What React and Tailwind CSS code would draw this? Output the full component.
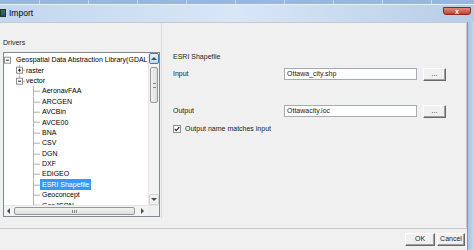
import React from "react";

const drivers = [
    "AeronavFAA",
    "ARCGEN",
    "AVCBin",
    "AVCE00",
    "BNA",
    "CSV",
    "DGN",
    "DXF",
    "EDIGEO",
    "ESRI Shapefile",
    "Geoconcept",
    "GeoJSON",
];

function Expander({ x, open }) {
    return (
        <g>
            <rect x={x} y="2.2" width="6" height="6" fill="#fff" stroke="#8f8f8f" strokeWidth="1" />
            <line x1={x + 1.5} y1="5.2" x2={x + 4.5} y2="5.2" stroke="#222" strokeWidth="1" />
            {!open && <line x1={x + 3} y1="3.7" x2={x + 3} y2="6.7" stroke="#222" strokeWidth="1" />}
        </g>
    );
}

function TreeRow({ kind, label, selected }) {
    const line = "#b0b0b0";
    let lines = null;
    let textLeft = 38;
    if (kind === "root") {
        lines = <Expander x={0.5} open />;
        textLeft = 12;
    } else if (kind === "raster") {
        lines = (
            <g>
                <line x1="15.5" y1="0" x2="15.5" y2="10.4" stroke={line} />
                <line x1="15.5" y1="5.2" x2="21" y2="5.2" stroke={line} />
                <Expander x={12.5} open={false} />
            </g>
        );
        textLeft = 22;
    } else if (kind === "vector") {
        lines = (
            <g>
                <line x1="15.5" y1="0" x2="15.5" y2="5.2" stroke={line} />
                <line x1="15.5" y1="5.2" x2="21" y2="5.2" stroke={line} />
                <Expander x={12.5} open />
            </g>
        );
        textLeft = 22;
    } else {
        lines = (
            <g>
                <line x1="29.5" y1="0" x2="29.5" y2="10.4" stroke={line} />
                <line x1="29.5" y1="5.2" x2="36" y2="5.2" stroke={line} />
            </g>
        );
    }
    return (
        <div className="h-[10.4px] shrink-0 flex items-center relative">
            <svg width="40" height="10.4" viewBox="0 0 40 10.4" className="absolute left-0 top-0">
                {lines}
            </svg>
            <span
                style={{ marginLeft: selected ? textLeft - 2 : textLeft }}
                className={
                    selected
                        ? "relative whitespace-nowrap bg-[#3399ff] text-white px-[2px] leading-[11px]"
                        : "relative whitespace-nowrap leading-[10px]"
                }
            >
                {label}
            </span>
        </div>
    );
}

function Arrow({ dir }) {
    const pts = {
        up: "1,5 4,2 7,5",
        down: "1,2 4,5 7,2",
        left: "5,1 2,4 5,7",
        right: "3,1 6,4 3,7",
    }[dir];
    return (
        <svg width="8" height="8" viewBox="0 0 8 8">
            <polygon points={pts} fill="#4d4d4d" />
        </svg>
    );
}

function ClassicButton({ children, w }) {
    return (
        <div
            className={`${w} h-[13px] flex items-center justify-center bg-[#f0f0f0] border border-t-white border-l-white border-r-[#696969] border-b-[#696969] shadow-[inset_-1px_-1px_0_#a0a0a0]`}
        >
            {children}
        </div>
    );
}

export default function App() {
    return (
        <div className="w-[474px] h-[250px] overflow-hidden flex flex-col bg-[#f0f0f0] text-black text-[7px] font-['Liberation_Sans',Arial,sans-serif]">
            {/* title bar */}
            <div className="h-[22px] shrink-0 flex flex-col bg-gradient-to-r from-[#c2d6ee] via-[#d8e7f6] to-[#b7cce6]">
                <div className="h-[5px] shrink-0 flex bg-[#98b7e0] border-b border-[#e8f0fa]">
                    <div className="w-[40px] shrink-0 border-r border-[#c6d8ef]" />
                    {[0, 1, 2, 3, 4, 5, 6, 7, 8].map((i) => (
                        <div key={i} className="w-[49px] shrink-0 border-r border-[#c6d8ef]" />
                    ))}
                </div>
                <div className="flex-1 flex items-start">
                    <div className="mt-[4px] w-[6px] h-[8px] bg-gradient-to-b from-[#3f6f5a] to-[#2a4a6e] border border-[#1d3a2f]" />
                    <span className="ml-[3px] mt-[3px] text-[8.5px] leading-[11px]">Import</span>
                    <div className="ml-auto mr-[3px] mt-[2px] w-[28px] h-[8px] rounded-b-[3px] bg-gradient-to-b from-[#e08a7d] to-[#c4402f] border border-[#8a2a1e] flex items-center justify-center">
                        <span className="text-white text-[7px] font-bold leading-[7px]">x</span>
                    </div>
                </div>
            </div>

            {/* body */}
            <div className="flex-1 flex">
                <div className="flex-1 flex flex-col">
                    <div className="h-[207px] shrink-0 flex border-t border-r border-b border-[#c9c9c9]">
                        {/* drivers tree */}
                        <div className="w-[161px] shrink-0 flex flex-col pl-[3px]">
                            <div className="pt-[15px] leading-[10px] text-[#222]">Drivers</div>
                            <div className="mt-[4px] w-[157px] h-[165px] border border-[#828790] bg-white flex flex-col">
                                <div className="flex-1 flex min-h-0">
                                    <div className="flex-1 flex flex-col pt-[2px] overflow-hidden">
                                        <TreeRow kind="root" label="Geospatial Data Abstraction Library(GDAL)" />
                                        <TreeRow kind="raster" label="raster" />
                                        <TreeRow kind="vector" label="vector" />
                                        {drivers.map((d) => (
                                            <TreeRow key={d} kind="leaf" label={d} selected={d === "ESRI Shapefile"} />
                                        ))}
                                    </div>
                                    <div className="w-[11px] shrink-0 flex flex-col bg-[#f3f3f3] border-l border-[#e6e6e6]">
                                        <div className="h-[11px] flex items-center justify-center bg-gradient-to-b from-[#e3f1fc] to-[#bcdcf6] border border-[#3c7fb1] rounded-[2px]">
                                            <Arrow dir="up" />
                                        </div>
                                        <div className="mt-[3px] h-[36px] mx-[1px] rounded-[2px] border border-[#979797] bg-gradient-to-r from-[#f3f3f3] to-[#dcdcdc] flex items-center justify-center">
                                            <div className="w-[3px] h-[5px] border-t border-b border-[#888]" />
                                        </div>
                                        <div className="flex-1" />
                                        <div className="h-[11px] flex items-center justify-center border border-[#d5d5d5] rounded-[2px] bg-[#f0f0f0]">
                                            <Arrow dir="down" />
                                        </div>
                                    </div>
                                </div>
                                <div className="h-[11px] shrink-0 flex bg-[#f3f3f3] border-t border-[#e6e6e6]">
                                    <div className="w-[10px] flex items-center justify-center">
                                        <Arrow dir="left" />
                                    </div>
                                    <div className="w-[121px] my-[1px] rounded-[2px] border border-[#979797] bg-gradient-to-b from-[#f3f3f3] to-[#dcdcdc] flex items-center justify-center">
                                        <div className="w-[5px] h-[3px] border-l border-r border-[#888] flex justify-center">
                                            <div className="w-px h-full bg-[#888]" />
                                        </div>
                                    </div>
                                    <div className="flex-1 flex items-center justify-center">
                                        <Arrow dir="right" />
                                    </div>
                                    <div className="w-[11px] bg-[#f0f0f0]" />
                                </div>
                            </div>
                        </div>

                        {/* options pane */}
                        <div className="flex-1 flex flex-col pl-[11px] pt-[29px] mb-[10px] border-l border-[#dadada] text-[#222]">
                            <div className="leading-[10px]">ESRI Shapefile</div>
                            <div className="mt-[6px] h-[12px] flex items-center">
                                <span className="w-[111px]">Input</span>
                                <div className="w-[133px] h-[12px] bg-white border border-[#a5acb5] flex items-center pl-[2px]">
                                    Ottawa_city.shp
                                </div>
                                <div className="ml-[6px]">
                                    <ClassicButton w="w-[23px]">...</ClassicButton>
                                </div>
                            </div>
                            <div className="mt-[25px] h-[12px] flex items-center">
                                <span className="w-[111px]">Output</span>
                                <div className="w-[133px] h-[12px] bg-white border border-[#a5acb5] flex items-center pl-[2px]">
                                    Ottawacity.ioc
                                </div>
                                <div className="ml-[6px]">
                                    <ClassicButton w="w-[23px]">...</ClassicButton>
                                </div>
                            </div>
                            <div className="mt-[7px] flex items-center">
                                <svg width="8" height="8" viewBox="0 0 8 8">
                                    <rect x="0.5" y="0.5" width="7" height="7" fill="#fff" stroke="#8e8f8f" />
                                    <polyline points="1.8,4 3.3,5.6 6.3,2" fill="none" stroke="#333" strokeWidth="1.2" />
                                </svg>
                                <span className="ml-[4px] leading-[10px]">Output name matches input</span>
                            </div>
                        </div>
                    </div>

                    {/* footer */}
                    <div className="flex-1 flex justify-end items-start pt-[4px] pr-[2px] gap-[2px] text-[#222]">
                        <ClassicButton w="w-[30px]">OK</ClassicButton>
                        <ClassicButton w="w-[28px]">Cancel</ClassicButton>
                    </div>
                </div>
                <div className="w-[7px] shrink-0 bg-gradient-to-r from-[#a9c3e2] to-[#c4d7ee] border-l border-[#7f9db9]" />
            </div>
        </div>
    );
}
